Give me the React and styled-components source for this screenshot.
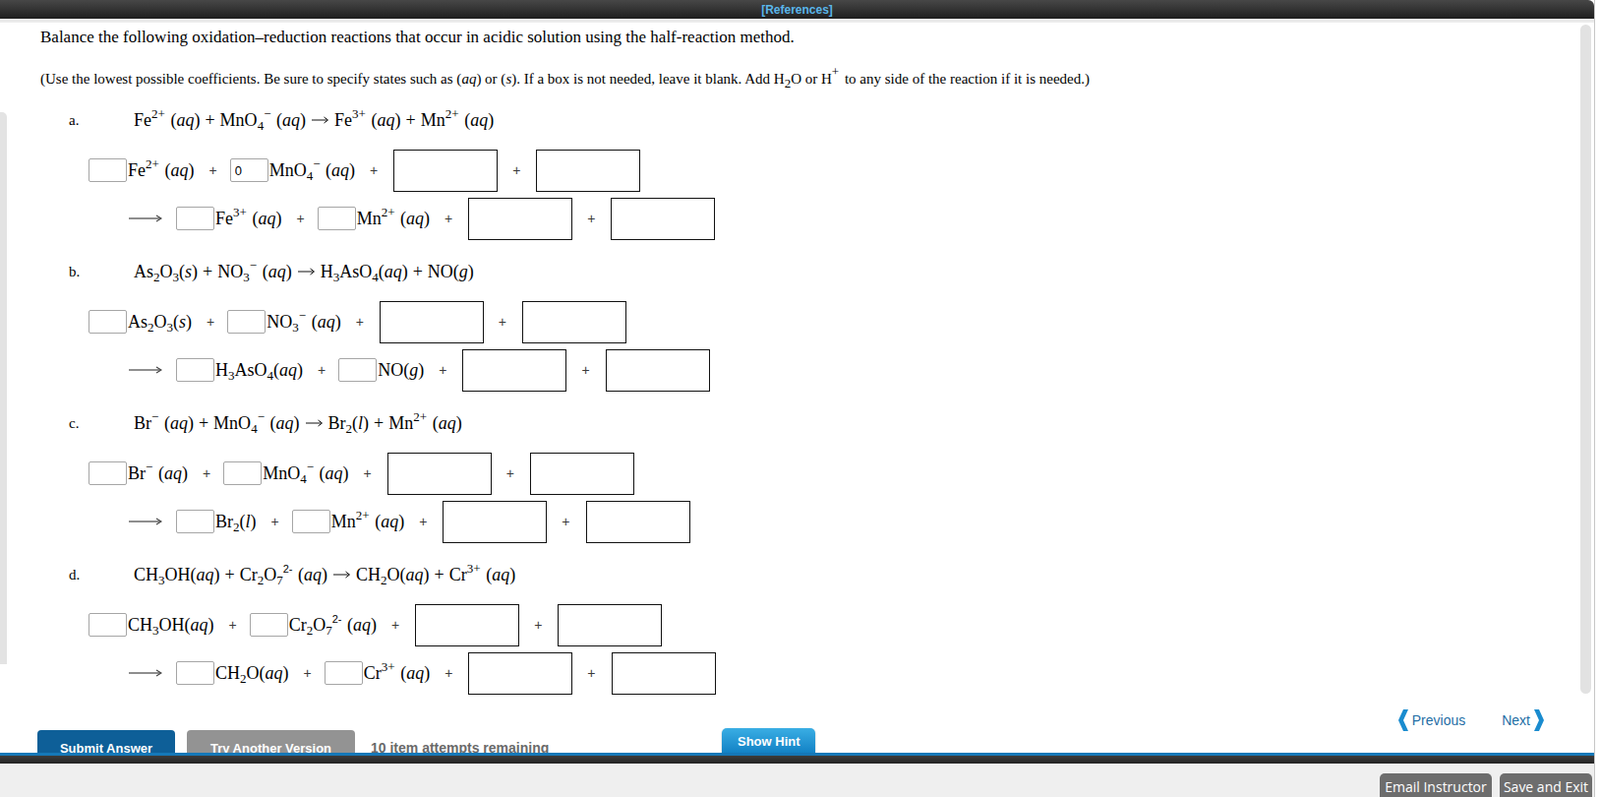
import React from "react";
import styled, { createGlobalStyle } from "styled-components";

const GlobalStyle = createGlobalStyle`
  html, body {
    margin: 0;
    padding: 0;
    background: #fff;
    overflow: hidden;
  }
  body {
    font-family: "Liberation Serif", "Times New Roman", serif;
    color: #000;
  }
`;

const I = styled.i`
  font-style: italic;
`;
const Sup = styled.sup`
  font-size: 13px;
  line-height: 0;
  vertical-align: 8px;
  margin-right: 2px;
`;
const Sub = styled.sub`
  font-size: 13px;
  line-height: 0;
  vertical-align: -4px;
`;
const SupPlain = styled(Sup)`
  font-family: "Liberation Sans", Arial, sans-serif;
  font-size: 11px;
`;
const Op = styled.span`
  display: inline-block;
  margin: 0 5px;
`;
const ArrowOp = styled.svg`
  margin: 0 6px;
  vertical-align: 2px;
`;

const aq = (
  <>
    {"\u2009"}(<I>aq</I>)
  </>
);
const plus = <Op>+</Op>;
const arrow = (
  <ArrowOp width="17" height="8" viewBox="0 0 17 8">
    <line x1="0" y1="4" x2="16" y2="4" stroke="#111" strokeWidth="1" />
    <path d="M12.5 1 L16.5 4 L12.5 7" fill="none" stroke="#111" strokeWidth="1" />
  </ArrowOp>
);

const items = [
  {
    label: "a.",
    equation: (
      <>
        Fe<Sup>2+</Sup>{aq}{plus}MnO<Sub>4</Sub><Sup>−</Sup>{aq}{arrow}Fe<Sup>3+</Sup>{aq}{plus}Mn
        <Sup>2+</Sup>{aq}
      </>
    ),
    reactants: [
      <>Fe<Sup>2+</Sup>{aq}</>,
      <>MnO<Sub>4</Sub><Sup>−</Sup>{aq}</>,
    ],
    products: [
      <>Fe<Sup>3+</Sup>{aq}</>,
      <>Mn<Sup>2+</Sup>{aq}</>,
    ],
    second: "0",
  },
  {
    label: "b.",
    equation: (
      <>
        As<Sub>2</Sub>O<Sub>3</Sub>(<I>s</I>){plus}NO<Sub>3</Sub><Sup>−</Sup>{aq}{arrow}H<Sub>3</Sub>AsO
        <Sub>4</Sub>(<I>aq</I>){plus}NO(<I>g</I>)
      </>
    ),
    reactants: [
      <>As<Sub>2</Sub>O<Sub>3</Sub>(<I>s</I>)</>,
      <>NO<Sub>3</Sub><Sup>−</Sup>{aq}</>,
    ],
    products: [
      <>H<Sub>3</Sub>AsO<Sub>4</Sub>(<I>aq</I>)</>,
      <>NO(<I>g</I>)</>,
    ],
  },
  {
    label: "c.",
    equation: (
      <>
        Br<Sup>−</Sup>{aq}{plus}MnO<Sub>4</Sub><Sup>−</Sup>{aq}{arrow}Br<Sub>2</Sub>(<I>l</I>){plus}Mn
        <Sup>2+</Sup>{aq}
      </>
    ),
    reactants: [
      <>Br<Sup>−</Sup>{aq}</>,
      <>MnO<Sub>4</Sub><Sup>−</Sup>{aq}</>,
    ],
    products: [
      <>Br<Sub>2</Sub>(<I>l</I>)</>,
      <>Mn<Sup>2+</Sup>{aq}</>,
    ],
  },
  {
    label: "d.",
    equation: (
      <>
        CH<Sub>3</Sub>OH(<I>aq</I>){plus}Cr<Sub>2</Sub>O<Sub>7</Sub><SupPlain>2-</SupPlain>{aq}{arrow}CH
        <Sub>2</Sub>O(<I>aq</I>){plus}Cr<Sup>3+</Sup>{aq}
      </>
    ),
    reactants: [
      <>CH<Sub>3</Sub>OH(<I>aq</I>)</>,
      <>Cr<Sub>2</Sub>O<Sub>7</Sub><SupPlain>2-</SupPlain>{aq}</>,
    ],
    products: [
      <>CH<Sub>2</Sub>O(<I>aq</I>)</>,
      <>Cr<Sup>3+</Sup>{aq}</>,
    ],
  },
];

function LongArrow() {
  return (
    <ArrowSvg width="34" height="10" viewBox="0 0 34 10">
      <line x1="0" y1="5" x2="32" y2="5" stroke="#444" strokeWidth="1.2" />
      <path d="M28 2 L33 5 L28 8" fill="none" stroke="#444" strokeWidth="1.2" />
    </ArrowSvg>
  );
}

function Chevron({ flip }) {
  return (
    <ChevronSvg width="11" height="22" viewBox="0 0 11 22">
      <path
        d={flip ? "M1 0 L6 0 L11 11 L6 22 L1 22 L6 11 Z" : "M10 0 L5 0 L0 11 L5 22 L10 22 L5 11 Z"}
        fill="#1a8ccf"
      />
    </ChevronSvg>
  );
}

function Half({ species, second, arrow }) {
  return (
    <EqRow $second={arrow}>
      {arrow && <LongArrow />}
      <Coef defaultValue="" />
      <Species>{species[0]}</Species>
      <Plus>+</Plus>
      <Coef defaultValue={second || ""} />
      <Species>{species[1]}</Species>
      <Plus>+</Plus>
      <Blank />
      <Plus>+</Plus>
      <Blank />
    </EqRow>
  );
}

function Item({ item }) {
  return (
    <ItemWrap>
      <ItemHead>
        <Label>{item.label}</Label>
        <Equation>{item.equation}</Equation>
      </ItemHead>
      <Half species={item.reactants} second={item.second} />
      <Half species={item.products} arrow />
    </ItemWrap>
  );
}

function App() {
  return (
    <>
      <GlobalStyle />
      <Frame>
        <TopBar>
          <RefLink>[References]</RefLink>
        </TopBar>
        <Body>
          <LeftRail />
          <Main>
            <Intro>
              Balance the following oxidation–reduction reactions that occur in acidic solution using the
              half-reaction method.
            </Intro>
            <Intro $small>
              (Use the lowest possible coefficients. Be sure to specify states such as (<I>aq</I>) or (<I>s</I>
              ). If a box is not needed, leave it blank. Add H<Sub>2</Sub>O or H<Sup>+</Sup> to any side of the
              reaction if it is needed.)
            </Intro>
            {items.map((item) => (
              <Item key={item.label} item={item} />
            ))}
            <NavRow>
              <NavLink>
                <Chevron />
                Previous
              </NavLink>
              <NavLink>
                Next
                <Chevron flip />
              </NavLink>
            </NavRow>
            <ActionRow>
              <ActionButton $bg="#0e5f98">Submit Answer</ActionButton>
              <ActionButton $bg="#939393" $wide>
                Try Another Version
              </ActionButton>
              <Attempts>10 item attempts remaining</Attempts>
              <HintButton>Show Hint</HintButton>
            </ActionRow>
          </Main>
          <ScrollTrack />
        </Body>
        <BottomBar />
        <Footer>
          <FooterButton $w={114}>Email Instructor</FooterButton>
          <FooterButton $w={94}>Save and Exit</FooterButton>
        </Footer>
      </Frame>
    </>
  );
}

export default App;

const Frame = styled.div`
  width: 1621px;
  height: 810px;
  display: flex;
  flex-direction: column;
  border-right: 1px solid #c6c6c6;
`;

const TopBar = styled.div`
  height: 19px;
  flex-shrink: 0;
  background: linear-gradient(#474747, #1f1f1f);
  border-radius: 0 6px 0 0;
  display: flex;
  justify-content: center;
  align-items: center;
`;

const RefLink = styled.span`
  font-family: "Liberation Sans", Arial, sans-serif;
  font-weight: bold;
  font-size: 12px;
  color: #5ab6ea;
`;

const Body = styled.div`
  height: 742px;
  flex-shrink: 0;
  display: flex;
  border-top: 4px solid #ececec;
  overflow: hidden;
  background: #fff;
`;

const LeftRail = styled.div`
  width: 7px;
  height: 561px;
  margin-top: 91px;
  flex-shrink: 0;
  background: #e3e3e3;
  border-radius: 0 5px 0 0;
`;

const Main = styled.div`
  flex: 1;
  padding: 5px 0 0 34px;
  display: flex;
  flex-direction: column;
`;

const Intro = styled.p`
  margin: ${(p) => (p.$small ? "22px" : "0")} 0 0;
  font-size: ${(p) => (p.$small ? "15px" : "17px")};
  line-height: 20px;
  white-space: nowrap;
`;

const ItemWrap = styled.div`
  margin-top: 20px;
`;

const ItemHead = styled.div`
  display: flex;
  align-items: center;
  height: 24px;
  padding-left: 29px;
`;

const Label = styled.span`
  width: 66px;
  font-size: 15px;
`;

const Equation = styled.span`
  font-size: 18px;
  white-space: nowrap;
`;

const EqRow = styled.div`
  display: flex;
  align-items: center;
  height: 44px;
  margin-top: ${(p) => (p.$second ? "5px" : "17px")};
  padding-left: ${(p) => (p.$second ? "90px" : "49px")};
  font-size: 18px;
  white-space: nowrap;
`;

const ArrowSvg = styled.svg`
  margin-right: 14px;
  flex-shrink: 0;
`;

const Coef = styled.input`
  box-sizing: border-box;
  width: 39px;
  height: 24px;
  border: 1px solid #a6a6a6;
  border-radius: 2px;
  padding: 0 4px;
  font-family: "Liberation Sans", Arial, sans-serif;
  font-size: 13px;
  background: #fff;
  outline: none;
  flex-shrink: 0;
`;

const Species = styled.span`
  padding-left: 1px;
`;

const Plus = styled.span`
  font-family: "Liberation Sans", Arial, sans-serif;
  font-size: 14px;
  color: #3a3a3a;
  margin: 0 13px 0 15px;
`;

const Blank = styled.div`
  box-sizing: border-box;
  width: 106px;
  height: 43px;
  margin-left: 3px;
  border: 1px solid #111;
  flex-shrink: 0;
`;

const NavRow = styled.div`
  display: flex;
  justify-content: flex-end;
  align-items: center;
  gap: 37px;
  height: 20px;
  margin-top: 16px;
  padding-right: 37px;
`;

const NavLink = styled.span`
  display: flex;
  align-items: center;
  gap: 3px;
  font-family: "Liberation Sans", Arial, sans-serif;
  font-size: 14px;
  color: #1f6ea5;
`;

const ChevronSvg = styled.svg`
  display: block;
`;

const ActionRow = styled.div`
  display: flex;
  align-items: flex-start;
  margin-left: -3px;
  height: 34px;
  flex-shrink: 0;
`;

const ActionButton = styled.div`
  box-sizing: border-box;
  width: ${(p) => (p.$wide ? "171px" : "140px")};
  height: 34px;
  margin-right: ${(p) => (p.$wide ? "16px" : "12px")};
  padding-top: 11px;
  background: ${(p) => p.$bg};
  border-radius: 4px 4px 0 0;
  color: #fff;
  font-family: "Liberation Sans", Arial, sans-serif;
  font-weight: bold;
  font-size: 13px;
  text-align: center;
`;

const Attempts = styled.span`
  padding-top: 10px;
  font-family: "Liberation Sans", Arial, sans-serif;
  font-weight: bold;
  font-size: 14px;
  color: #6a6a6a;
`;

const HintButton = styled.div`
  box-sizing: border-box;
  width: 95px;
  height: 30px;
  margin: -2px 0 0 176px;
  padding-top: 6px;
  background: linear-gradient(#3aaee4, #0b79bf);
  border-radius: 5px;
  box-shadow: 0 1px 2px rgba(0, 0, 0, 0.3);
  color: #fff;
  font-family: "Liberation Sans", Arial, sans-serif;
  font-weight: bold;
  font-size: 13px;
  text-align: center;
`;

const ScrollTrack = styled.div`
  width: 11px;
  height: 680px;
  margin: 2px 3px 0 0;
  flex-shrink: 0;
  background: #e2e2e2;
  border-radius: 6px;
`;

const BottomBar = styled.div`
  height: 8px;
  flex-shrink: 0;
  border-top: 3px solid #1578b8;
  background: linear-gradient(#3c3c3c, #242424);
`;

const Footer = styled.div`
  flex: 1;
  display: flex;
  justify-content: flex-end;
  align-items: flex-start;
  gap: 8px;
  padding: 10px 2px 0 0;
  background: #efefef;
`;

const FooterButton = styled.div`
  box-sizing: border-box;
  width: ${(p) => p.$w}px;
  height: 24px;
  padding-top: 4px;
  background: #6d6d6d;
  border-radius: 5px 5px 0 0;
  color: #fff;
  font-family: "Open Sans", Arial, sans-serif;
  font-size: 14px;
  text-align: center;
`;
